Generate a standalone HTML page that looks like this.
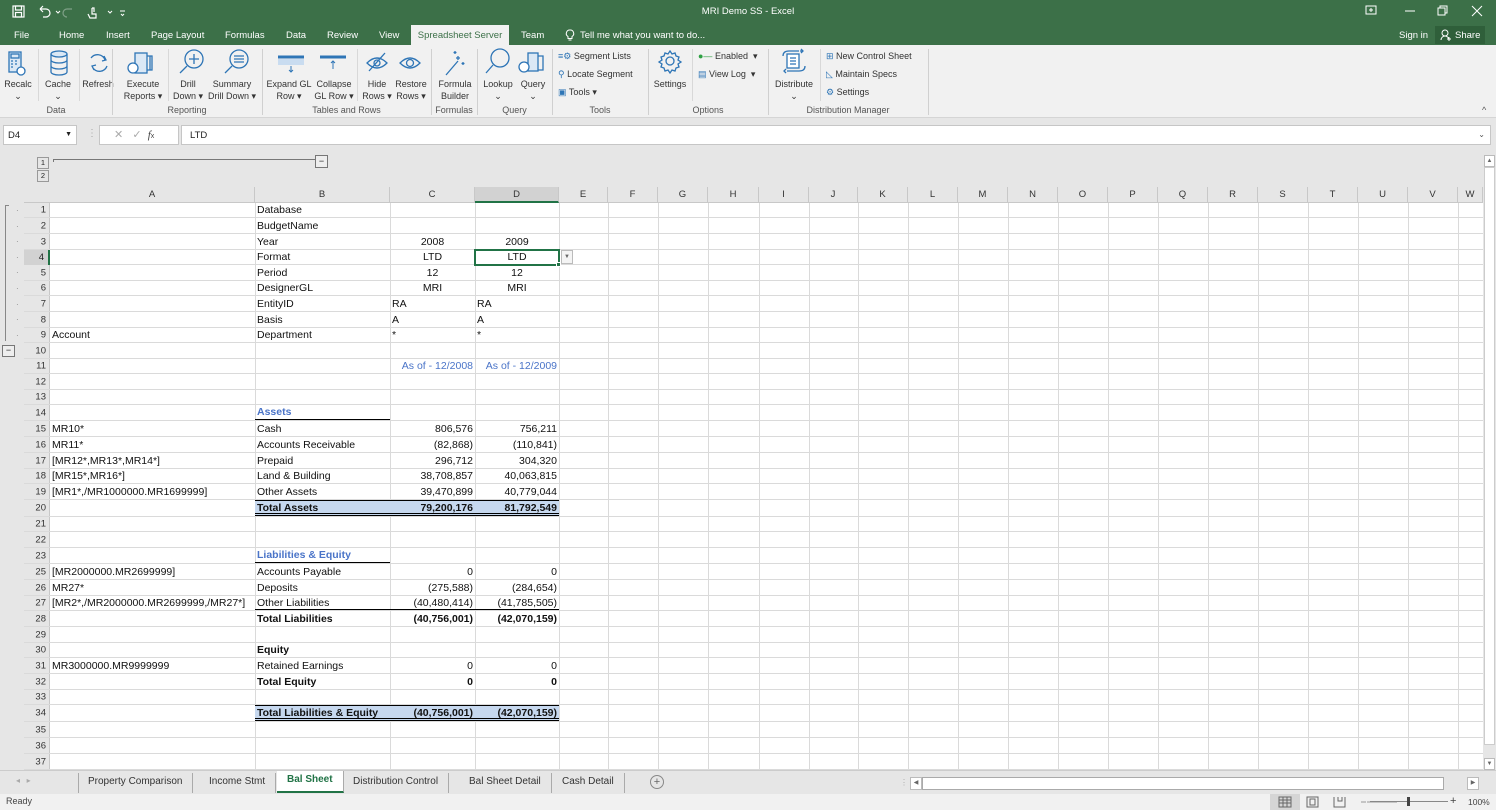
<!DOCTYPE html>
<html><head><meta charset="utf-8">
<style>
*{box-sizing:border-box;margin:0;padding:0}
body{width:1496px;height:810px;overflow:hidden;position:relative;font-family:"Liberation Sans",sans-serif;background:#fff;color:#222}
.a{position:absolute}
.title{left:0;top:0;width:1496px;height:45px;background:#3c7048;color:#fff}
.tab{position:absolute;top:30px;font-size:9.5px;color:#fff}
.ribbon{left:0;top:45px;width:1496px;height:73px;background:#f1f1f1;border-bottom:1px solid #d5d5d5}
.rl{position:absolute;font-size:9px;color:#333;text-align:center;white-space:nowrap;line-height:12px}
.gl{position:absolute;top:60px;font-size:9px;color:#555;text-align:center}
.sep{position:absolute;top:4px;width:1px;height:66px;background:#d0d0d0}
.sep2{position:absolute;top:4px;width:1px;height:52px;background:#d8d8d8}
.small{position:absolute;font-size:9px;color:#333;white-space:nowrap}
.r{position:absolute;left:24px;width:1459px;border-bottom:1px solid #dadada}
.n{position:absolute;left:2px;width:20px;text-align:right;font-size:9.5px;color:#333;top:50%;transform:translateY(-50%)}
.c{position:absolute;top:0;bottom:0;font-size:10.5px;white-space:nowrap;padding:0 2px;display:flex;align-items:center;color:#111}
.rt{justify-content:flex-end}.ct{justify-content:center}
.v{position:absolute;top:187px;width:1px;height:583px;background:#dadada}
.ch{position:absolute;top:187px;height:16px;font-size:9.5px;color:#333;text-align:center;line-height:16px;border-right:1px solid #c8c8c8}
.blue{color:#4a74c8;font-weight:bold}
.bl{color:#4a74c8}
b{font-weight:bold}
.st{position:absolute;top:773px;height:20px;font-size:10px;color:#333;line-height:18px;border-right:1px solid #aaa;padding:0 10px}
</style></head><body>

<div class="a title">
  <svg class="a" style="left:12px;top:5px" width="120" height="14" viewBox="0 0 120 14" fill="none" stroke="#fff" stroke-width="1.2">
    <rect x="1" y="1" width="11" height="11"/><rect x="3.5" y="1" width="6" height="4"/><rect x="3.5" y="7.5" width="6" height="4.5"/>
    <path d="M28 4 h6 a4 4 0 0 1 0 8 h-3 M28 4 l3 -3 M28 4 l3 3"/>
    <path d="M44 6 l2 2 l2 -2" stroke-width="1"/>
    <path d="M60 4 h-5 a4 4 0 0 0 0 8" stroke="#7fa087"/>
    <path d="M80 3 v6 h4 v4 h-6 l-2 -4 M80 3 h2 v4" />
    <path d="M96 6 l2 2 l2 -2" stroke-width="1"/>
    <path d="M108 6 h5 M109 9 l1.5 1.5 l1.5 -1.5" stroke-width="1"/>
  </svg>
  <div class="a" style="left:0;width:1496px;top:6px;text-align:center;font-size:9.5px">MRI Demo SS - Excel</div>
  <svg class="a" style="left:1360px;top:4px" width="130" height="14" fill="none" stroke="#fff" stroke-width="1">
    <rect x="6" y="2" width="10" height="8"/><path d="M9 6 h4 M11 4 v4"/>
    <path d="M45 7 h10"/>
    <rect x="78" y="4" width="7" height="7"/><path d="M80 4 v-2 h7 v7 h-2"/>
    <path d="M112 2 l10 10 M122 2 l-10 10"/>
  </svg>
  <div class="tab" style="left:14px">File</div>
  <div class="tab" style="left:59px">Home</div>
  <div class="tab" style="left:106px">Insert</div>
  <div class="tab" style="left:151px">Page Layout</div>
  <div class="tab" style="left:225px">Formulas</div>
  <div class="tab" style="left:286px">Data</div>
  <div class="tab" style="left:327px">Review</div>
  <div class="tab" style="left:379px">View</div>
  <div class="a" style="left:411px;top:25px;width:98px;height:21px;background:#f1f1f1;color:#3c7048;font-size:9.5px;text-align:center;line-height:21px">Spreadsheet Server</div>
  <div class="tab" style="left:521px">Team</div>
  <svg class="a" style="left:565px;top:29px" width="10" height="12" fill="none" stroke="#fff" stroke-width="1"><path d="M5 1 a3.5 3.5 0 0 1 2 6.5 v2 h-4 v-2 a3.5 3.5 0 0 1 2 -6.5 M3.5 11 h3"/></svg>
  <div class="tab" style="left:580px">Tell me what you want to do...</div>
  <div class="tab" style="left:1399px">Sign in</div>
  <div class="a" style="left:1435px;top:26px;width:50px;height:18px;background:#2f5f3a"></div>
  <svg class="a" style="left:1440px;top:29px" width="12" height="12" fill="none" stroke="#fff" stroke-width="1"><circle cx="5" cy="4" r="3"/><path d="M1 11 a4 4 0 0 1 8 0 M9 8 v4 M7 10 h4"/></svg>
  <div class="tab" style="left:1455px">Share</div>
</div>

<div class="a ribbon">
  <svg class="a" style="left:0;top:3px" width="930" height="34" fill="none" stroke="#2e75b6" stroke-width="1.3">
    <rect x="9" y="4" width="12" height="20" fill="#dbe8f5"/><rect x="11" y="6" width="8" height="4"/><path d="M11 13h2M15 13h2M11 16h2M15 16h2M11 19h2"/><circle cx="21" cy="23" r="4" fill="#fff"/>
    <ellipse cx="59" cy="6" rx="8" ry="3" fill="#dbe8f5"/><path d="M51 6 v18 a8 3 0 0 0 16 0 v-18 M51 12 a8 3 0 0 0 16 0 M51 18 a8 3 0 0 0 16 0"/>
    <path d="M91 10 a8 8 0 0 1 14 2 M107 18 a8 8 0 0 1 -14 2 M104 8 l2 4 l-4 1 M94 22 l-2 -4 l4 -1"/>
    <rect x="135" y="5" width="12" height="20" fill="#dbe8f5"/><path d="M147 8h5v14h-5M150 8v14"/><circle cx="133" cy="20" r="5" fill="#fff"/>
    <circle cx="194" cy="11" r="9"/><path d="M194 6v10M189 11h10M187 18l-7 7"/>
    <circle cx="239" cy="11" r="9"/><path d="M234 8h10M234 11h10M234 14h10M232 18l-7 7"/>
    <path d="M278 9h26" stroke-width="3"/><rect x="278" y="11" width="26" height="6" fill="#c9dcf0" stroke="none"/><path d="M291 18v6M289 22l2 2l2-2" stroke-width="1"/>
    <path d="M320 9h26" stroke-width="3"/><path d="M333 13v8M331 15l2-2l2 2" stroke-width="1"/>
    <path d="M367 15 q10 -10 20 0 q-10 10 -20 0z M369 23l16-18"/><circle cx="377" cy="15" r="3"/>
    <path d="M400 15 q10 -10 20 0 q-10 10 -20 0z"/><circle cx="410" cy="15" r="3.5"/>
    <path d="M446 27 l12 -14 M458 8 v4 M456 10h4 M463 14v3M461.5 15.5h3 M455 3v3M453.5 4.5h3"/>
    <circle cx="500" cy="10" r="9"/><path d="M493 17l-7 8"/>
    <rect x="528" y="5" width="10" height="18" fill="#dbe8f5"/><path d="M538 8h5v14h-5"/><circle cx="524" cy="19" r="5" fill="#fff"/>
    <circle cx="670" cy="13" r="4"/><path d="M670 3 l2 3 l3 -1 l1 3 l3 1 l-1 3 l3 2 l-3 2 l1 3 l-3 1 l-1 3 l-3 -1 l-2 3 l-2 -3 l-3 1 l-1 -3 l-3 -1 l1 -3 l-3 -2 l3 -2 l-1 -3 l3 -1 l1 -3 l3 1z"/>
    <rect x="787" y="6" width="12" height="14" fill="#fff"/><path d="M790 10h6M790 13h6M790 16h6 M783 8 q0 -5 6 -5 h10 M800 3l2 0 M805 18 q0 5 -6 5 h-12 M786 21l-2 2l2 2 M801 1l2 2l-2 2"/>
  </svg>
  <div class="rl" style="left:2px;top:33px;width:32px">Recalc<br>⌄</div>
  <div class="rl" style="left:42px;top:33px;width:32px">Cache<br>⌄</div>
  <div class="rl" style="left:80px;top:33px;width:36px">Refresh</div>
  <div class="rl" style="left:118px;top:33px;width:50px">Execute<br>Reports ▾</div>
  <div class="rl" style="left:170px;top:33px;width:36px">Drill<br>Down ▾</div>
  <div class="rl" style="left:206px;top:33px;width:52px">Summary<br>Drill Down ▾</div>
  <div class="rl" style="left:265px;top:33px;width:48px">Expand GL<br>Row ▾</div>
  <div class="rl" style="left:312px;top:33px;width:44px">Collapse<br>GL Row ▾</div>
  <div class="rl" style="left:361px;top:33px;width:32px">Hide<br>Rows ▾</div>
  <div class="rl" style="left:393px;top:33px;width:36px">Restore<br>Rows ▾</div>
  <div class="rl" style="left:435px;top:33px;width:40px">Formula<br>Builder</div>
  <div class="rl" style="left:480px;top:33px;width:36px">Lookup<br>⌄</div>
  <div class="rl" style="left:516px;top:33px;width:34px">Query<br>⌄</div>
  <div class="small" style="left:558px;top:6px"><span style="color:#2e75b6">≡⚙</span> Segment Lists</div>
  <div class="small" style="left:558px;top:24px"><span style="color:#2e75b6">⚲</span> Locate Segment</div>
  <div class="small" style="left:558px;top:42px"><span style="color:#2e75b6">▣</span> Tools ▾</div>
  <div class="rl" style="left:650px;top:33px;width:40px">Settings</div>
  <div class="small" style="left:698px;top:6px"><span style="color:#2ea043">●—</span> Enabled &nbsp;▾</div>
  <div class="small" style="left:698px;top:24px"><span style="color:#2e75b6">▤</span> View Log &nbsp;▾</div>
  <div class="rl" style="left:772px;top:33px;width:44px">Distribute<br>⌄</div>
  <div class="small" style="left:826px;top:6px"><span style="color:#2e75b6">⊞</span> New Control Sheet</div>
  <div class="small" style="left:826px;top:24px"><span style="color:#2e75b6">◺</span> Maintain Specs</div>
  <div class="small" style="left:826px;top:42px"><span style="color:#2e75b6">⚙</span> Settings</div>
  <div class="gl" style="left:0;width:112px">Data</div>
  <div class="gl" style="left:112px;width:150px">Reporting</div>
  <div class="gl" style="left:262px;width:169px">Tables and Rows</div>
  <div class="gl" style="left:431px;width:46px">Formulas</div>
  <div class="gl" style="left:477px;width:75px">Query</div>
  <div class="gl" style="left:552px;width:96px">Tools</div>
  <div class="gl" style="left:648px;width:120px">Options</div>
  <div class="gl" style="left:768px;width:160px">Distribution Manager</div>
  <div class="sep2" style="left:38px"></div><div class="sep2" style="left:79px"></div>
  <div class="sep" style="left:112px"></div><div class="sep2" style="left:168px"></div>
  <div class="sep" style="left:262px"></div><div class="sep2" style="left:357px"></div>
  <div class="sep" style="left:431px"></div><div class="sep" style="left:477px"></div>
  <div class="sep" style="left:552px"></div><div class="sep" style="left:648px"></div>
  <div class="sep2" style="left:692px"></div>
  <div class="sep" style="left:768px"></div><div class="sep2" style="left:820px"></div>
  <div class="sep" style="left:928px"></div>
  <div class="a" style="left:1482px;top:60px;font-size:9px;color:#555">^</div>
</div>

<div class="a" style="left:0;top:118px;width:1496px;height:69px;background:#e6e6e6"></div>
<div class="a" style="left:3px;top:125px;width:74px;height:20px;background:#fff;border:1px solid #c6c6c6;font-size:9.5px;padding:4px 4px">D4<span style="position:absolute;right:4px;font-size:7px;top:5px">▼</span></div>
<div class="a" style="left:87px;top:128px;font-size:10px;color:#aaa">⋮</div>
<div class="a" style="left:99px;top:125px;width:80px;height:20px;background:#fff;border:1px solid #c6c6c6;font-size:11px;color:#aaa;padding:2px 14px">✕ &nbsp; ✓ &nbsp;<i style="color:#444;font-family:'Liberation Serif'">f</i><span style="font-size:7px;color:#444">x</span></div>
<div class="a" style="left:181px;top:125px;width:1310px;height:20px;background:#fff;border:1px solid #c6c6c6;font-size:9.5px;padding:4px 8px">LTD<span style="position:absolute;right:5px;font-size:8px;color:#555">⌄</span></div>

<div class="a" style="left:37px;top:157px;width:12px;height:12px;border:1px solid #999;background:#e6e6e6;font-size:7.5px;text-align:center;line-height:10px">1</div>
<div class="a" style="left:37px;top:170px;width:12px;height:12px;border:1px solid #999;background:#e6e6e6;font-size:7.5px;text-align:center;line-height:10px">2</div>
<div class="a" style="left:53px;top:159px;width:262px;height:3px;border-left:1px solid #777;border-top:1px solid #777"></div>
<div class="a" style="left:315px;top:155px;width:13px;height:13px;border:1px solid #777;background:#eee;font-size:9px;text-align:center;line-height:10px">−</div>
<div class="a" style="left:1px;top:189px;width:11px;height:12px;border:1px solid #999;font-size:7.5px;text-align:center;line-height:10px">1</div>
<div class="a" style="left:12px;top:189px;width:11px;height:12px;border:1px solid #999;font-size:7.5px;text-align:center;line-height:10px">2</div>

<div class="a" style="left:0;top:187px;width:24px;height:583px;background:#e6e6e6"></div>
<div class="a" style="left:24px;top:187px;width:26px;height:583px;background:#e6e6e6;border-right:1px solid #c8c8c8"></div>
<div class="a" style="left:24px;top:187px;width:1459px;height:16px;background:#e6e6e6;border-bottom:1px solid #c8c8c8"></div>
<div class="a" style="left:5px;top:205px;width:4px;height:136px;border-left:1px solid #888;border-top:1px solid #888"></div>
<div class="a" style="left:2px;top:345px;width:13px;height:12px;border:1px solid #777;background:#eee;font-size:9px;text-align:center;line-height:9px">−</div>

<div class="ch" style="left:50px;width:205px">A</div>
<div class="ch" style="left:255px;width:135px">B</div>
<div class="ch" style="left:390px;width:85px">C</div>
<div class="ch" style="left:475px;width:84px;background:#d2d2d2;border-bottom:2px solid #217346">D</div>
<div class="ch" style="left:559px;width:49px">E</div>
<div class="ch" style="left:608px;width:50px">F</div>
<div class="ch" style="left:658px;width:50px">G</div>
<div class="ch" style="left:708px;width:51px">H</div>
<div class="ch" style="left:759px;width:50px">I</div>
<div class="ch" style="left:809px;width:49px">J</div>
<div class="ch" style="left:858px;width:50px">K</div>
<div class="ch" style="left:908px;width:50px">L</div>
<div class="ch" style="left:958px;width:50px">M</div>
<div class="ch" style="left:1008px;width:50px">N</div>
<div class="ch" style="left:1058px;width:50px">O</div>
<div class="ch" style="left:1108px;width:50px">P</div>
<div class="ch" style="left:1158px;width:50px">Q</div>
<div class="ch" style="left:1208px;width:50px">R</div>
<div class="ch" style="left:1258px;width:50px">S</div>
<div class="ch" style="left:1308px;width:50px">T</div>
<div class="ch" style="left:1358px;width:50px">U</div>
<div class="ch" style="left:1408px;width:50px">V</div>
<div class="ch" style="left:1458px;width:25px">W</div>

<div class="v" style="left:255px;top:203px;height:567px"></div><div class="v" style="left:390px;top:203px;height:567px"></div>
<div class="v" style="left:475px;top:203px;height:567px"></div><div class="v" style="left:559px;top:203px;height:567px"></div>
<div class="v" style="left:608px;top:203px;height:567px"></div><div class="v" style="left:658px;top:203px;height:567px"></div>
<div class="v" style="left:708px;top:203px;height:567px"></div><div class="v" style="left:759px;top:203px;height:567px"></div>
<div class="v" style="left:809px;top:203px;height:567px"></div><div class="v" style="left:858px;top:203px;height:567px"></div>
<div class="v" style="left:908px;top:203px;height:567px"></div><div class="v" style="left:958px;top:203px;height:567px"></div>
<div class="v" style="left:1008px;top:203px;height:567px"></div><div class="v" style="left:1058px;top:203px;height:567px"></div>
<div class="v" style="left:1108px;top:203px;height:567px"></div><div class="v" style="left:1158px;top:203px;height:567px"></div>
<div class="v" style="left:1208px;top:203px;height:567px"></div><div class="v" style="left:1258px;top:203px;height:567px"></div>
<div class="v" style="left:1308px;top:203px;height:567px"></div><div class="v" style="left:1358px;top:203px;height:567px"></div>
<div class="v" style="left:1408px;top:203px;height:567px"></div><div class="v" style="left:1458px;top:203px;height:567px"></div>

<div class="a" style="left:16px;top:203px;font-size:8px;color:#888;line-height:15.6px">·<br>·<br>·<br>·<br>·<br>·<br>·<br>·<br>·</div>

<div class="r" style="top:203px;height:15px"><span class="n">1</span><span class="c" style="left:231px">Database</span></div>
<div class="r" style="top:218px;height:16px"><span class="n">2</span><span class="c" style="left:231px">BudgetName</span></div>
<div class="r" style="top:234px;height:16px"><span class="n">3</span><span class="c" style="left:231px">Year</span><span class="c ct" style="left:366px;width:85px">2008</span><span class="c ct" style="left:451px;width:84px">2009</span></div>
<div class="r" style="top:250px;height:15px"><span class="n">4</span><span class="c" style="left:231px">Format</span><span class="c ct" style="left:366px;width:85px">LTD</span><span class="c ct" style="left:451px;width:84px">LTD</span></div>
<div class="r" style="top:265px;height:16px"><span class="n">5</span><span class="c" style="left:231px">Period</span><span class="c ct" style="left:366px;width:85px">12</span><span class="c ct" style="left:451px;width:84px">12</span></div>
<div class="r" style="top:281px;height:15px"><span class="n">6</span><span class="c" style="left:231px">DesignerGL</span><span class="c ct" style="left:366px;width:85px">MRI</span><span class="c ct" style="left:451px;width:84px">MRI</span></div>
<div class="r" style="top:296px;height:16px"><span class="n">7</span><span class="c" style="left:231px">EntityID</span><span class="c" style="left:366px">RA</span><span class="c" style="left:451px">RA</span></div>
<div class="r" style="top:312px;height:16px"><span class="n">8</span><span class="c" style="left:231px">Basis</span><span class="c" style="left:366px">A</span><span class="c" style="left:451px">A</span></div>
<div class="r" style="top:328px;height:15px"><span class="n">9</span><span class="c" style="left:26px">Account</span><span class="c" style="left:231px">Department</span><span class="c" style="left:366px">*</span><span class="c" style="left:451px">*</span></div>
<div class="r" style="top:343px;height:16px"><span class="n">10</span></div>
<div class="r" style="top:359px;height:15px"><span class="n">11</span><span class="c rt bl" style="left:366px;width:85px">As of - 12/2008</span><span class="c rt bl" style="left:451px;width:84px">As of - 12/2009</span></div>
<div class="r" style="top:374px;height:16px"><span class="n">12</span></div>
<div class="r" style="top:390px;height:15px"><span class="n">13</span></div>
<div class="r" style="top:405px;height:16px"><span class="n">14</span><span class="c blue" style="left:231px;width:135px;border-bottom:1.5px solid #000">Assets</span></div>
<div class="r" style="top:421px;height:16px"><span class="n">15</span><span class="c" style="left:26px">MR10*</span><span class="c" style="left:231px">Cash</span><span class="c rt" style="left:366px;width:85px">806,576</span><span class="c rt" style="left:451px;width:84px">756,211</span></div>
<div class="r" style="top:437px;height:16px"><span class="n">16</span><span class="c" style="left:26px">MR11*</span><span class="c" style="left:231px">Accounts Receivable</span><span class="c rt" style="left:366px;width:85px">(82,868)</span><span class="c rt" style="left:451px;width:84px">(110,841)</span></div>
<div class="r" style="top:453px;height:16px"><span class="n">17</span><span class="c" style="left:26px">[MR12*,MR13*,MR14*]</span><span class="c" style="left:231px">Prepaid</span><span class="c rt" style="left:366px;width:85px">296,712</span><span class="c rt" style="left:451px;width:84px">304,320</span></div>
<div class="r" style="top:469px;height:15px"><span class="n">18</span><span class="c" style="left:26px">[MR15*,MR16*]</span><span class="c" style="left:231px">Land &amp; Building</span><span class="c rt" style="left:366px;width:85px">38,708,857</span><span class="c rt" style="left:451px;width:84px">40,063,815</span></div>
<div class="r" style="top:484px;height:16px"><span class="n">19</span><span class="c" style="left:26px">[MR1*,/MR1000000.MR1699999]</span><span class="c" style="left:231px">Other Assets</span><span class="c rt" style="left:366px;width:85px">39,470,899</span><span class="c rt" style="left:451px;width:84px">40,779,044</span></div>
<div class="r" style="top:500px;height:17px"><span class="n">20</span><span class="c" style="left:231px;width:304px;background:#c6d8ef;border-top:1px solid #000;border-bottom:3px double #000"></span><span class="c" style="left:231px"><b>Total Assets</b></span><span class="c rt" style="left:366px;width:85px"><b>79,200,176</b></span><span class="c rt" style="left:451px;width:84px"><b>81,792,549</b></span></div>
<div class="r" style="top:517px;height:15px"><span class="n">21</span></div>
<div class="r" style="top:532px;height:16px"><span class="n">22</span></div>
<div class="r" style="top:548px;height:16px"><span class="n">23</span><span class="c blue" style="left:231px;width:135px;border-bottom:1.5px solid #000">Liabilities &amp; Equity</span></div>
<div class="r" style="top:564px;height:16px"><span class="n">25</span><span class="c" style="left:26px">[MR2000000.MR2699999]</span><span class="c" style="left:231px">Accounts Payable</span><span class="c rt" style="left:366px;width:85px">0</span><span class="c rt" style="left:451px;width:84px">0</span></div>
<div class="r" style="top:580px;height:16px"><span class="n">26</span><span class="c" style="left:26px">MR27*</span><span class="c" style="left:231px">Deposits</span><span class="c rt" style="left:366px;width:85px">(275,588)</span><span class="c rt" style="left:451px;width:84px">(284,654)</span></div>
<div class="r" style="top:596px;height:15px"><span class="n">27</span><span class="c" style="left:26px">[MR2*,/MR2000000.MR2699999,/MR27*]</span><span class="c" style="left:231px;width:304px;border-bottom:1px solid #000"></span><span class="c" style="left:231px">Other Liabilities</span><span class="c rt" style="left:366px;width:85px">(40,480,414)</span><span class="c rt" style="left:451px;width:84px">(41,785,505)</span></div>
<div class="r" style="top:611px;height:16px"><span class="n">28</span><span class="c" style="left:231px"><b>Total Liabilities</b></span><span class="c rt" style="left:366px;width:85px"><b>(40,756,001)</b></span><span class="c rt" style="left:451px;width:84px"><b>(42,070,159)</b></span></div>
<div class="r" style="top:627px;height:16px"><span class="n">29</span></div>
<div class="r" style="top:643px;height:15px"><span class="n">30</span><span class="c" style="left:231px"><b>Equity</b></span></div>
<div class="r" style="top:658px;height:16px"><span class="n">31</span><span class="c" style="left:26px">MR3000000.MR9999999</span><span class="c" style="left:231px">Retained Earnings</span><span class="c rt" style="left:366px;width:85px">0</span><span class="c rt" style="left:451px;width:84px">0</span></div>
<div class="r" style="top:674px;height:16px"><span class="n">32</span><span class="c" style="left:231px"><b>Total Equity</b></span><span class="c rt" style="left:366px;width:85px"><b>0</b></span><span class="c rt" style="left:451px;width:84px"><b>0</b></span></div>
<div class="r" style="top:690px;height:15px"><span class="n">33</span></div>
<div class="r" style="top:705px;height:17px"><span class="n">34</span><span class="c" style="left:231px;width:304px;background:#c6d8ef;border-top:1px solid #000;border-bottom:3px double #000"></span><span class="c" style="left:231px"><b>Total Liabilities &amp; Equity</b></span><span class="c rt" style="left:366px;width:85px"><b>(40,756,001)</b></span><span class="c rt" style="left:451px;width:84px"><b>(42,070,159)</b></span></div>
<div class="r" style="top:722px;height:16px"><span class="n">35</span></div>
<div class="r" style="top:738px;height:16px"><span class="n">36</span></div>
<div class="r" style="top:754px;height:16px"><span class="n">37</span></div>

<div class="a" style="left:24px;top:250px;width:26px;height:15px;background:#d2d2d2;border-right:2px solid #217346;font-size:9.5px;text-align:right;padding-right:4px;line-height:15px">4</div>
<div class="a" style="left:474px;top:249px;width:86px;height:17px;border:2px solid #217346"></div>
<div class="a" style="left:556px;top:262px;width:5px;height:5px;background:#217346;border:1px solid #fff"></div>
<div class="a" style="left:561px;top:250px;width:12px;height:14px;border:1px solid #bbb;background:#f4f4f4;font-size:6px;text-align:center;line-height:13px;color:#666">▼</div>

<div class="a" style="left:1483px;top:153px;width:13px;height:617px;background:#e6e6e6"></div>
<div class="a" style="left:1484px;top:155px;width:11px;height:12px;border:1px solid #bbb;background:#fff;font-size:6px;text-align:center;line-height:10px;color:#666">▲</div>
<div class="a" style="left:1484px;top:167px;width:11px;height:578px;border:1px solid #ccc;background:#fff"></div>
<div class="a" style="left:1484px;top:758px;width:11px;height:12px;border:1px solid #bbb;background:#fff;font-size:6px;text-align:center;line-height:10px;color:#666">▼</div>

<div class="a" style="left:0;top:770px;width:1496px;height:24px;background:#e6e6e6;border-top:1px solid #ccc"></div>
<div class="a" style="left:16px;top:776px;font-size:8px;color:#aaa">◂ &nbsp; ▸</div>
<div class="a" style="left:78px;top:773px;height:20px;border-left:1px solid #aaa"></div>
<div class="st" style="left:78px">Property Comparison</div>
<div class="st" style="left:199px">Income Stmt</div>
<div class="st" style="left:277px;background:#fff;color:#217346;font-weight:bold;border-bottom:2px solid #217346;top:771px;height:22px">Bal Sheet</div>
<div class="st" style="left:343px">Distribution Control</div>
<div class="st" style="left:459px">Bal Sheet Detail</div>
<div class="st" style="left:552px">Cash Detail</div>
<div class="a" style="left:650px;top:775px;width:14px;height:14px;border:1px solid #888;border-radius:50%;font-size:11px;line-height:12px;text-align:center;color:#666">+</div>
<div class="a" style="left:900px;top:778px;font-size:8px;color:#aaa">⋮</div>
<div class="a" style="left:910px;top:777px;width:12px;height:13px;border:1px solid #bbb;background:#fff;font-size:6px;text-align:center;line-height:11px;color:#666">◀</div>
<div class="a" style="left:922px;top:777px;width:522px;height:13px;border:1px solid #aaa;background:#fff"></div>
<div class="a" style="left:1467px;top:777px;width:12px;height:13px;border:1px solid #bbb;background:#fff;font-size:6px;text-align:center;line-height:11px;color:#666">▶</div>

<div class="a" style="left:0;top:794px;width:1496px;height:16px;background:#f1f1f1"></div>
<div class="a" style="left:6px;top:796px;font-size:9px;color:#444">Ready</div>
<div class="a" style="left:1270px;top:794px;width:30px;height:16px;background:#d5d5d5"></div>
<svg class="a" style="left:1277px;top:796px" width="120" height="12" fill="none" stroke="#666" stroke-width="1">
  <rect x="2" y="1" width="12" height="10"/><path d="M2 4h12M2 7h12M6 1v10M10 1v10"/>
  <rect x="30" y="1" width="11" height="10"/><rect x="33" y="3" width="5" height="6"/>
  <path d="M57 1v10h11v-10M61 1v4h4v-4"/>
  <path d="M84 6h5M90 6h60" stroke="#999"/>
</svg>
<div class="a" style="left:1370px;top:801px;width:78px;height:1px;background:#888"></div>
<div class="a" style="left:1407px;top:797px;width:3px;height:9px;background:#444"></div>
<div class="a" style="left:1450px;top:795px;font-size:11px;color:#444">+</div>
<div class="a" style="left:1468px;top:797px;font-size:8.5px;color:#444">100%</div>
</body></html>
